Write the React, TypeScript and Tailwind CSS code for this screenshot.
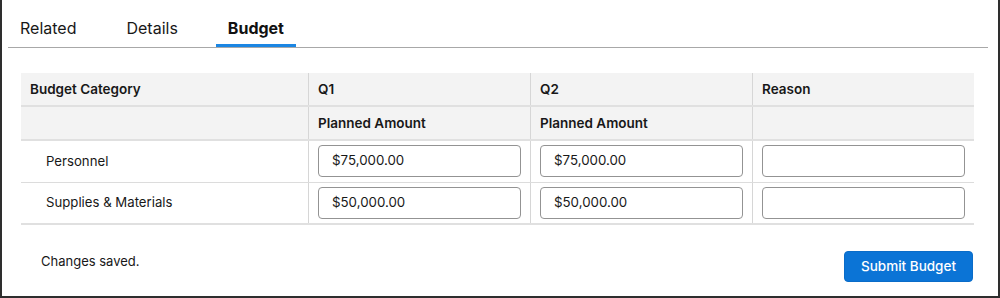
import React from "react";

const cols = "grid grid-cols-[288px_222px_222px_221px]";

function Input({ value }: { value: string }) {
  return (
    <div className="h-[32px] w-full rounded-[4px] border border-[#939393] bg-white px-[13px] flex items-center text-[13.3px] text-[#181818]">
      {value}
    </div>
  );
}

export default function App() {
  const rows = [
    { name: "Personnel", q1: "$75,000.00", q2: "$75,000.00" },
    { name: "Supplies & Materials", q1: "$50,000.00", q2: "$50,000.00" },
  ];
  return (
    <div
      className="w-[1000px] h-[298px] border-l-2 border-r-2 border-b-2 border-[#2e2e2e] bg-white text-[#181818] overflow-hidden"
      style={{ fontFamily: "Inter, 'Liberation Sans', Arial, sans-serif" }}
    >
      <div className="ml-[6px] mr-[10px] flex gap-[26px] border-b border-[#a8a8a8]">
        <div className="px-3 pt-[16px] pb-[4px] border-b-[3px] border-transparent text-[16px] leading-6 text-[#181818]">
          Related
        </div>
        <div className="px-3 pt-[16px] pb-[4px] border-b-[3px] border-transparent text-[16px] leading-6 text-[#181818]">
          Details
        </div>
        <div className="px-3 pt-[16px] pb-[4px] border-b-[3px] border-[#1b86e3] text-[16px] leading-6 font-bold text-[#111]">
          Budget
        </div>
      </div>

      <div className="ml-[19px] mt-[25px] w-[953px]">
        <div className={`${cols} bg-[#f3f3f3] text-[13.5px] font-semibold h-[34px] border-b-2 border-[#e0e0e0]`}>
          <div className="pl-[9px] pt-[1px] flex items-center border-r border-[#d6d6d6]">Budget Category</div>
          <div className="pl-[9px] pt-[1px] flex items-center border-r border-[#d6d6d6]">Q1</div>
          <div className="pl-[9px] pt-[1px] flex items-center border-r border-[#d6d6d6]">Q2</div>
          <div className="pl-[9px] pt-[1px] flex items-center">Reason</div>
        </div>
        <div className={`${cols} bg-[#f3f3f3] text-[13.5px] font-semibold h-[34px] border-b-2 border-[#e0e0e0]`}>
          <div className="border-r border-[#d6d6d6]"></div>
          <div className="pl-[9px] pt-[1px] flex items-center border-r border-[#d6d6d6]">Planned Amount</div>
          <div className="pl-[9px] pt-[1px] flex items-center border-r border-[#d6d6d6]">Planned Amount</div>
          <div></div>
        </div>
        {rows.map((r, i) => (
          <div
            key={r.name}
            className={`${cols} h-[42px] text-[13.2px] ${
              i === rows.length - 1 ? "border-b-2 border-[#e0e0e0]" : "border-b border-[#dcdcdc]"
            }`}
          >
            <div className="pl-[25px] flex items-center border-r border-[#d6d6d6]">{r.name}</div>
            <div className="px-[9px] pt-[4px] border-r border-[#d6d6d6]">
              <Input value={r.q1} />
            </div>
            <div className="px-[9px] pt-[4px] border-r border-[#d6d6d6]">
              <Input value={r.q2} />
            </div>
            <div className="px-[9px] pt-[4px]">
              <Input value="" />
            </div>
          </div>
        ))}

        <div className="mt-[26px] flex items-start justify-between pl-[20px] pr-[1px]">
          <div className="text-[13px] leading-[20px] text-[#181818]">Changes saved.</div>
          <button className="h-[31px] px-[16px] rounded-[4px] bg-[#0b74d6] text-white text-[13.5px] font-medium border border-[#0a6cc8]">
            Submit Budget
          </button>
        </div>
      </div>
    </div>
  );
}
